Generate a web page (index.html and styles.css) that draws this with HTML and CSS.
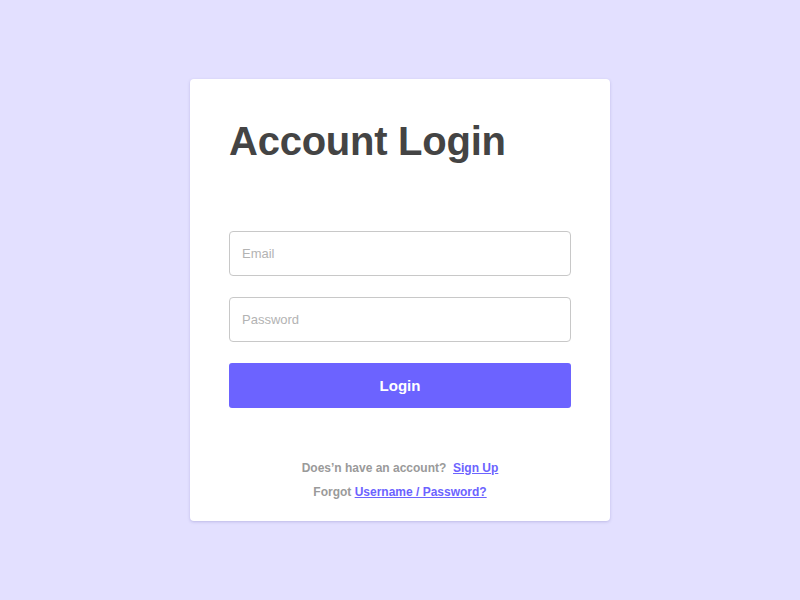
FILE: index.html
```html
<!DOCTYPE html>
<html lang="en">
<head>
<meta charset="utf-8">
<title>Account Login</title>
<link rel="stylesheet" href="styles.css">
</head>
<body>
<main class="page">
  <section class="card">
    <h1 class="title">Account Login</h1>
    <form class="form">
      <input class="field" type="email" placeholder="Email">
      <input class="field" type="password" placeholder="Password">
      <button class="btn" type="button">Login</button>
    </form>
    <div class="links">
      <p class="line">Does’n have an account?&nbsp; <a href="#">Sign Up</a></p>
      <p class="line">Forgot <a href="#">Username / Password?</a></p>
    </div>
  </section>
</main>
</body>
</html>
```
FILE: styles.css
```css
html, body {
  margin: 0;
  padding: 0;
  height: 100%;
}
body {
  background: #e3e0ff;
  font-family: "Liberation Sans", Arial, sans-serif;
}
.page {
  display: flex;
  justify-content: center;
  padding-top: 79px;
}
.card {
  width: 420px;
  box-sizing: border-box;
  background: #fff;
  border-radius: 4px;
  box-shadow: 0 1px 3px rgba(80, 70, 160, 0.25);
  padding: 38px 39px 17px;
}
.title {
  margin: 0;
  font-size: 40px;
  font-weight: 700;
  color: #444;
  line-height: 48px;
  letter-spacing: -0.25px;
}
.form {
  display: flex;
  flex-direction: column;
  gap: 20px;
  margin-top: 66px;
}
.field {
  height: 45px;
  box-sizing: border-box;
  border: 1px solid #c8c8c8;
  border-radius: 4px;
  padding: 0 12px;
  font-family: inherit;
  font-size: 13px;
  color: #333;
  outline: none;
}
.field + .field {
  margin-top: 1px;
}
.field::placeholder {
  color: #b3b3b3;
}
.btn {
  height: 45px;
  margin-top: 1px;
  border: none;
  border-radius: 3px;
  background: #6c63ff;
  color: #fff;
  font-family: inherit;
  font-size: 15px;
  font-weight: 700;
}
.links {
  margin-top: 48px;
  text-align: center;
}
.line {
  margin: 0;
  font-size: 12px;
  font-weight: 700;
  color: #9a9a9a;
  line-height: 24px;
}
.line a {
  color: #6c63ff;
  text-decoration: underline;
}
```
